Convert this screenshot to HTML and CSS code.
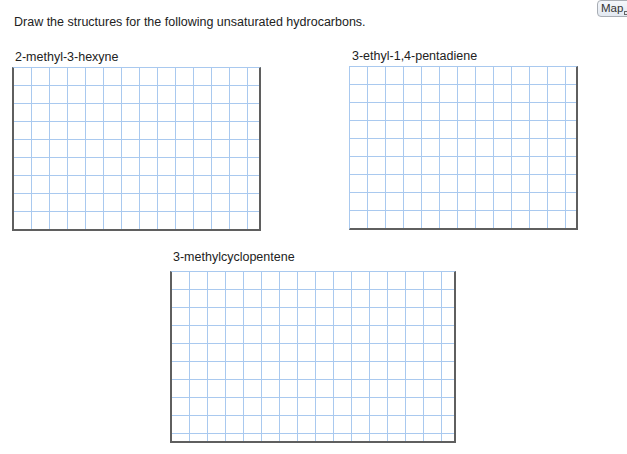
FILE: index.html
```html
<!DOCTYPE html>
<html>
<head>
<meta charset="utf-8">
<link rel="stylesheet" href="styles.css">
</head>
<body>
<div class="map-btn"><span class="map-text">Map</span><span class="map-box"></span></div>
<p class="intro">Draw the structures for the following unsaturated hydrocarbons.</p>
<div class="row">
  <div class="item item-a">
    <div class="label">2-methyl-3-hexyne</div>
    <div class="grid grid-a"></div>
  </div>
  <div class="item item-b">
    <div class="label">3-ethyl-1,4-pentadiene</div>
    <div class="grid grid-b"></div>
  </div>
</div>
<div class="item item-c">
  <div class="label">3-methylcyclopentene</div>
  <div class="grid grid-c"></div>
</div>
</body>
</html>
```
FILE: styles.css
```css
html, body {
  margin: 0;
  padding: 0;
  background: #ffffff;
}
body {
  font-family: "Liberation Sans", Arial, sans-serif;
  font-size: 12.5px;
  color: #222222;
  position: relative;
  width: 627px;
  height: 454px;
  overflow: hidden;
}
.intro {
  margin: 0;
  padding: 15px 0 0 14px;
  line-height: 14px;
  height: 14px;
}
.row {
  display: flex;
  padding-left: 12px;
  gap: 88px;
  margin-top: 21px;
}
.item-b {
  margin-top: -1px;
}
.label {
  line-height: 14px;
  padding-left: 3px;
  margin-bottom: 3px;
}
.grid {
  box-sizing: border-box;
  background-color: #ffffff;
  background-image:
    linear-gradient(to right, transparent 17px, #a9c9ef 17px, #a9c9ef 18px),
    linear-gradient(to bottom, transparent 17px, #a9c9ef 17px, #a9c9ef 18px);
  background-size: 18px 18px;
  background-origin: padding-box;
  border-top: 1px solid #a9c9ef;
  border-left: 2px solid #5f5f5f;
  border-right: 2px solid #5f5f5f;
  border-bottom: 2px solid #5f5f5f;
}
.grid-a {
  width: 249px;
  height: 164px;
}
.grid-b {
  width: 229px;
  height: 164px;
  border-left: 1px solid #a9c9ef;
}
.item-c {
  margin-left: 170px;
  margin-top: 19px;
  width: 286px;
}
.item-c .label {
  padding-left: 3px;
  margin-bottom: 7px;
}
.grid-c {
  width: 286px;
  height: 172px;
}
.map-btn {
  position: absolute;
  top: 0;
  left: 597px;
  width: 40px;
  height: 17px;
  box-sizing: border-box;
  border: 1px solid #a8adb4;
  border-radius: 4px;
  background: linear-gradient(to bottom, #f4f7fb, #e3e9f1);
  display: flex;
  align-items: flex-start;
  padding: 1px 0 0 3px;
  gap: 1px;
}
.map-text {
  font-size: 11.5px;
  line-height: 13px;
  color: #333333;
}
.map-box {
  width: 5px;
  height: 4px;
  border: 1px solid #666666;
  margin-top: 9px;
  box-sizing: border-box;
}
```
